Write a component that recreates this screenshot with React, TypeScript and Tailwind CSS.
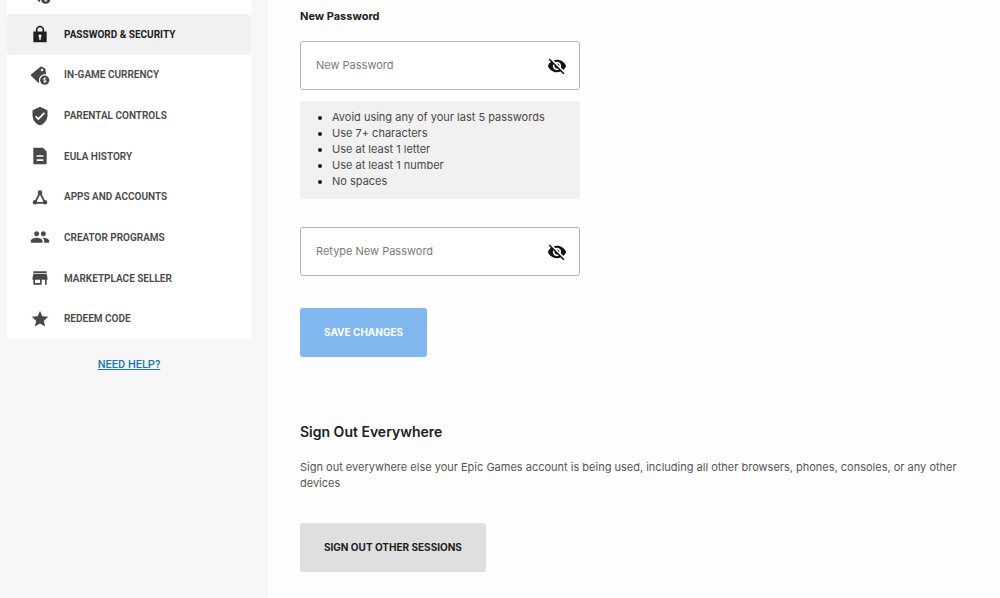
import { useState } from "react";
import type { ComponentType } from "react";
import { MdGroup, MdStar, MdStore, MdVerifiedUser, MdVisibilityOff } from "react-icons/md";

type IconProps = { className?: string };

function LockIcon({ className }: IconProps) {
  return (
    <svg viewBox="0 0 24 24" className={className} aria-hidden="true" fill="currentColor">
      <path
        fillRule="evenodd"
        d="M20 9h-3V7A5 5 0 0 0 7 7v2H4v13h16zM9 7a3 3 0 0 1 6 0v2H9zM12 12.500a1.900 1.900 0 0 1 1 3.500v3h-2v-3a1.900 1.900 0 0 1 1-3.500z"
      />
    </svg>
  );
}

function TagCoinIcon({ className }: IconProps) {
  return (
    <svg viewBox="0 0 20 20" className={className} aria-hidden="true" fill="currentColor">
      <path
        fillRule="evenodd"
        d="M10.500 1.800a1 1 0 0 1 .9-.2l3.600 2 .5.800.6 4.800a6 6 0 0 0-6.800 7.800L8.500 18 1 10.800a1 1 0 0 1 0-1.300zM12 3.800a1.200 1.200 0 1 0 0 2.400 1.200 1.200 0 0 0 0-2.400z"
      />
      <circle cx="14.700" cy="15.200" r="4.600" />
      <path
        d="M16.200 13.700c-.8-.6-2.800-.6-2.800.5s2.800.7 2.800 1.800-2.100 1.200-3 .5M14.700 12.500v5.400"
        fill="none"
        stroke="#fff"
        strokeWidth="0.800"
      />
    </svg>
  );
}

function DocumentIcon({ className }: IconProps) {
  return (
    <svg viewBox="0 0 24 24" className={className} aria-hidden="true" fill="currentColor">
      <path fillRule="evenodd" d="M4 2h11.500L20 6.500V22H4zM8 11v2h8v-2zM8 16v2h8v-2z" />
    </svg>
  );
}

function AppsIcon({ className }: IconProps) {
  return (
    <svg viewBox="0 0 20 20" className={className} aria-hidden="true" fill="currentColor">
      <path d="M10 5.500 5 15.800h10z" fill="none" stroke="currentColor" strokeWidth="1.800" />
      <circle cx="10" cy="5.500" r="2.200" />
      <circle cx="5" cy="15.300" r="2.200" />
      <circle cx="15" cy="15.300" r="2.200" />
    </svg>
  );
}

const navItems: { label: string; Icon: ComponentType<IconProps>; active?: boolean }[] = [
  { label: "PASSWORD & SECURITY", Icon: LockIcon, active: true },
  { label: "IN-GAME CURRENCY", Icon: TagCoinIcon },
  { label: "PARENTAL CONTROLS", Icon: MdVerifiedUser },
  { label: "EULA HISTORY", Icon: DocumentIcon },
  { label: "APPS AND ACCOUNTS", Icon: AppsIcon },
  { label: "CREATOR PROGRAMS", Icon: MdGroup },
  { label: "MARKETPLACE SELLER", Icon: MdStore },
  { label: "REDEEM CODE", Icon: MdStar },
];

const passwordRules = [
  "Avoid using any of your last 5 passwords",
  "Use 7+ characters",
  "Use at least 1 letter",
  "Use at least 1 number",
  "No spaces",
];

function Sidebar() {
  return (
    <aside className="w-[268px] shrink-0 bg-[#f7f7f7] pl-[7px] pr-[17px] font-['Roboto',sans-serif]">
      <div className="overflow-hidden rounded-b bg-white">
        {/* Tail of the item scrolled off above */}
        <div className="flex h-[14px] items-end overflow-hidden pb-[10px] pl-6">
          <TagCoinIcon className="size-5 shrink-0 text-[#3c3c3c]" />
        </div>
        <nav className="grid h-[325px] auto-rows-fr">
          {navItems.map(({ label, Icon, active }) => (
            <a
              key={label}
              href="#"
              aria-current={active ? "page" : undefined}
              className={
                active
                  ? "flex items-center gap-[14px] rounded-sm bg-[#f1f1f1] pl-[23px] text-[10px] font-bold text-[#202020]"
                  : "flex items-center gap-[14px] pl-[23px] text-[10px] font-semibold text-[#484848]"
              }
            >
              <Icon className="size-5 shrink-0" />
              {label}
            </a>
          ))}
        </nav>
      </div>
      <div className="pt-4 text-center leading-4">
        <a href="#" className="text-[11px] font-medium text-[#1a75b8] underline">
          NEED HELP?
        </a>
      </div>
    </aside>
  );
}

function PasswordField({ id, label }: { id: string; label: string }) {
  const [visible, setVisible] = useState(false);

  return (
    <div className="flex h-[49px] items-center rounded-[3px] border border-[#b4b4b4] bg-white pl-[15px] pr-3">
      <input
        id={id}
        type={visible ? "text" : "password"}
        aria-label={label}
        placeholder={label}
        className="min-w-0 flex-1 bg-transparent text-[11px] text-[#202020] outline-none placeholder:text-[#7a7a7a]"
      />
      <button type="button" aria-label="Toggle password visibility" onClick={() => setVisible(!visible)}>
        <MdVisibilityOff className="size-5 text-[#121212]" />
      </button>
    </div>
  );
}

export default function App() {
  return (
    <div className="flex min-h-screen bg-[#fefefe] font-['Inter',sans-serif]">
      <Sidebar />
      <main className="min-w-0 flex-1 px-8 pt-2 pb-6">
        <form className="max-w-[280px]" onSubmit={(e) => e.preventDefault()}>
          <label htmlFor="new-password" className="block text-[11px] leading-4 font-bold text-[#202020]">
            New Password
          </label>
          <div className="pt-[17px]">
            <PasswordField id="new-password" label="New Password" />
          </div>
          <ul className="mt-[11px] list-disc rounded-[3px] bg-[#f1f1f1] pt-2 pb-[10px] pl-8 text-[11px] leading-4 text-[#484848] marker:text-[#202020]">
            {passwordRules.map((rule) => (
              <li key={rule}>{rule}</li>
            ))}
          </ul>
          <div className="pt-7">
            <PasswordField id="retype-password" label="Retype New Password" />
          </div>
          <button type="submit" className="mt-8 h-[49px] rounded-[3px] bg-[#7fb7ee] px-6 text-[10px] font-bold text-white">
            SAVE CHANGES
          </button>
        </form>

        <section className="pt-[65px]">
          <h2 className="text-[14px] leading-5 font-semibold text-[#202020]">Sign Out Everywhere</h2>
          <p className="pt-[17px] text-[11px] leading-4 text-[#545454]">
            Sign out everywhere else your Epic Games account is being used, including all other browsers, phones,
            consoles, or any other devices
          </p>
          <button type="button" className="mt-8 h-[49px] rounded-[3px] bg-[#dfdfdf] px-6 text-[10px] font-bold text-[#202020]">
            SIGN OUT OTHER SESSIONS
          </button>
        </section>
      </main>
    </div>
  );
}
